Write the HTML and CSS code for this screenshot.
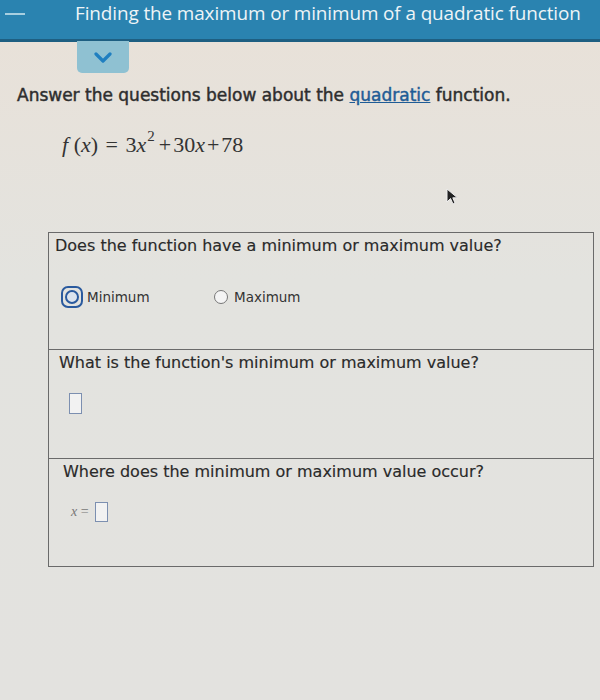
FILE: index.html
```html
<!DOCTYPE html>
<html>
<head>
<meta charset="utf-8">
<link rel="stylesheet" href="styles.css">
</head>
<body>
<div class="page">
  <header class="topbar">
    <span class="dash"></span>
    <h1 class="title">Finding the maximum or minimum of a quadratic function</h1>
  </header>
  <div class="tabrow">
    <div class="tab">
      <svg width="20" height="12" viewBox="0 0 20 12"><path d="M3 2 L10 9 L17 2" fill="none" stroke="#1f7fc0" stroke-width="3.2" stroke-linecap="round" stroke-linejoin="round"/></svg>
    </div>
  </div>
  <main class="content">
    <p class="intro">Answer the questions below about the <span class="link">quadratic</span> function.</p>
    <div class="formula"><i>f</i> (<i>x</i>) <span class="op">=</span> 3<i>x</i><sup>2</sup><span class="op">+</span>30<i>x</i><span class="op">+</span>78</div>
    <div class="cursor-row">
      <svg class="cursor" width="14" height="18" viewBox="0 0 14 18"><path d="M1 1 L1 14 L4.5 10.5 L7 16 L9 15 L6.8 9.8 L11.5 9.8 Z" fill="#222" stroke="#eee" stroke-width="1"/></svg>
    </div>
    <div class="qbox">
      <section class="q q1">
        <p class="qtext">Does the function have a minimum or maximum value?</p>
        <div class="options">
          <label class="opt opt-min"><span class="radio focused"><span class="ring"></span></span>Minimum</label>
          <label class="opt"><span class="radio"></span>Maximum</label>
        </div>
      </section>
      <section class="q q2">
        <p class="qtext">What is the function's minimum or maximum value?</p>
        <span class="ans"></span>
      </section>
      <section class="q q3">
        <p class="qtext">Where does the minimum or maximum value occur?</p>
        <div class="xrow"><span class="xeq"><i>x</i> =</span><span class="ans small"></span></div>
      </section>
    </div>
  </main>
</div>
</body>
</html>
```
FILE: styles.css
```css
html, body { margin: 0; padding: 0; }
body {
  width: 600px;
  height: 700px;
  overflow: hidden;
  background: linear-gradient(180deg, #e9e1d8 0%, #e3e3df 40%, #e3e2df 100%);
  font-family: "DejaVu Sans", Verdana, sans-serif;
  color: #2b2b2b;
}
.page { width: 600px; }
.topbar {
  height: 42px;
  background: #2a83b0;
  border-bottom: 3px solid #1e5f82;
  display: flex;
  align-items: center;
  box-sizing: border-box;
}
.dash {
  display: block;
  width: 20px;
  height: 2px;
  background: #a8cfe0;
  margin: 0 0 12px 5px;
}
.title {
  margin: 0 0 0 50px;
  font-family: "Open Sans", "Liberation Sans", sans-serif;
  font-weight: 400;
  font-size: 18.9px;
  color: #eef4f7;
  letter-spacing: -0.1px;
  padding-bottom: 13px;
}
.tabrow { padding-left: 77px; }
.tab {
  width: 52px;
  height: 32px;
  background: #8fc1d2;
  border-radius: 0 0 5px 5px;
  display: flex;
  align-items: center;
  justify-content: center;
  margin-top: -1px;
}
.tab svg { margin-top: 2px; }
.content { padding: 0 0 0 17px; }
.intro {
  margin: 12px 0 0 0;
  font-size: 17px;
  font-weight: 400;
  -webkit-text-stroke: 0.45px #2e2e2e;
  color: #2e2e2e;
}
.link { color: #1f5c96; -webkit-text-stroke: 0.45px #1f5c96; text-decoration: underline; }
.formula {
  margin: 27px 0 0 45px;
  font-family: "Liberation Serif", "Times New Roman", serif;
  font-size: 22px;
  color: #333;
  white-space: nowrap;
}
.formula .op { margin: 0 2px; }
.formula sup { font-size: 15px; position: relative; top: -3px; margin-left: 1px; margin-right: 2px; line-height: 0; }
.cursor-row { height: 50px; position: relative; }
.cursor { position: absolute; left: 429px; top: 30px; }
.qbox {
  margin: 24px 0 0 31px;
  width: 546px;
  border: 1px solid #6a6a6a;
  box-sizing: border-box;
}
.q { border-top: 1px solid #6a6a6a; padding: 0 8px; box-sizing: border-box; }
.q:first-child { border-top: none; }
.q1 { height: 116px; padding-left: 6px; }
.q2 { height: 109px; padding-left: 10px; }
.q3 { height: 108px; padding-left: 14px; }
.qtext {
  margin: 0;
  padding-top: 3px;
  font-size: 16px;
  font-weight: 400;
  -webkit-text-stroke: 0.15px #2a2a2a;
  color: #2a2a2a;
}
.options {
  display: flex;
  align-items: center;
  margin-top: 31px;
  padding-left: 6px;
}
.opt {
  display: flex;
  align-items: center;
  font-size: 13.5px;
  color: #333;
}
.opt-min { width: 153px; }
.radio {
  width: 14px;
  height: 14px;
  border: 1px solid #777;
  border-radius: 50%;
  box-sizing: border-box;
  margin-right: 6px;
  background: #f4f4f4;
}
.radio.focused {
  width: 22px;
  height: 22px;
  border: 2px solid #2a5a9e;
  border-radius: 7px;
  display: flex;
  align-items: center;
  justify-content: center;
  margin-right: 4px;
  background: transparent;
}
.ring {
  width: 14px;
  height: 14px;
  border-radius: 50%;
  border: 2px solid #2a5a9e;
  box-sizing: border-box;
  background: #dce4ee;
}
.ans {
  display: block;
  width: 13px;
  height: 21px;
  border: 1px solid #7c8fb0;
  box-sizing: border-box;
  margin: 21px 0 0 10px;
  background: #f2f2f2;
}
.xrow { display: flex; align-items: center; margin-top: 21px; padding-left: 8px; }
.xeq {
  font-family: "Liberation Serif", serif;
  font-size: 14px;
  color: #777;
  margin-right: 6px;
}
.ans.small { margin: 0; width: 13px; height: 20px; }
```
